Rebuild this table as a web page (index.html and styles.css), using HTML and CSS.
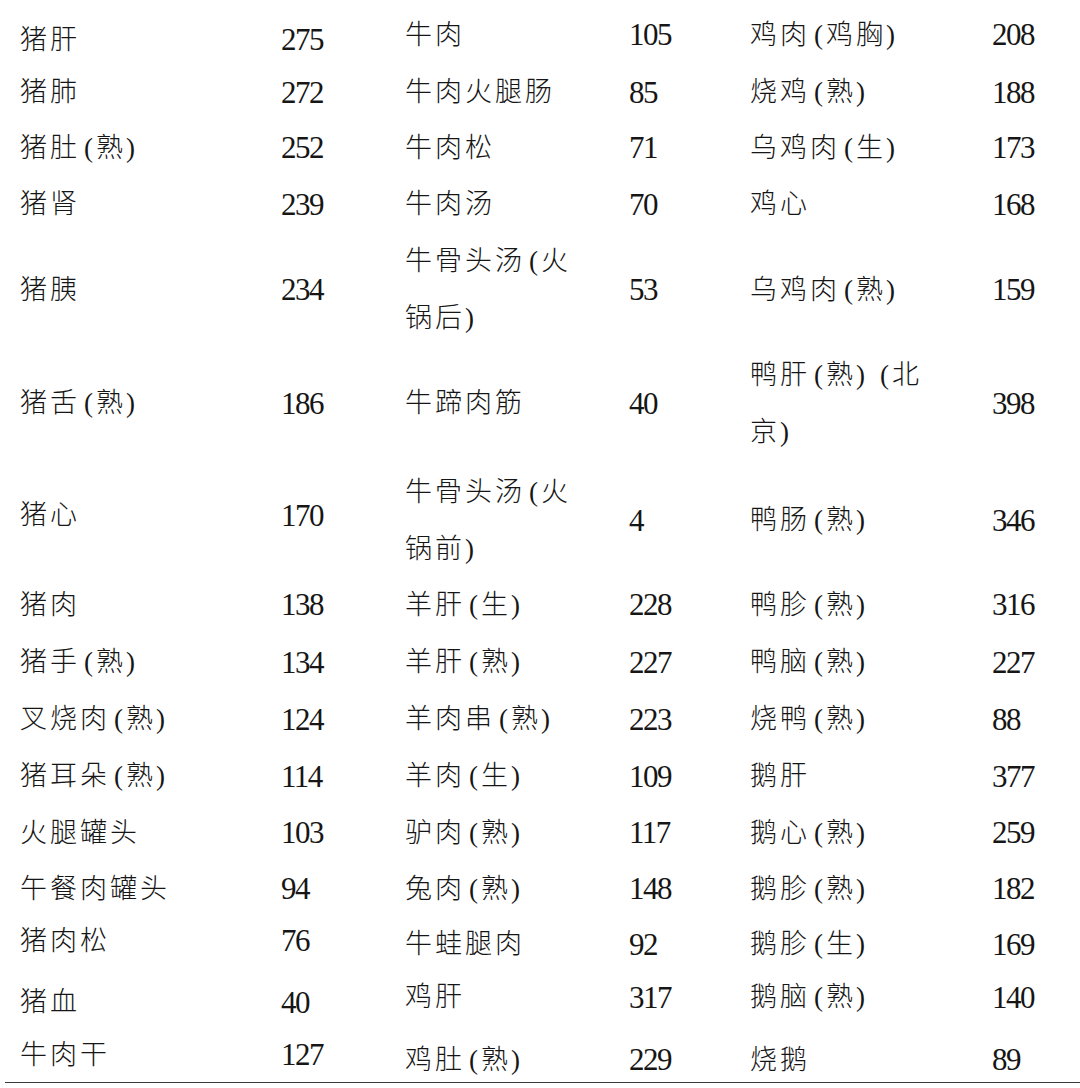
FILE: index.html
```html
<!DOCTYPE html>
<html lang="zh-CN">
<head>
<meta charset="utf-8">
<title>食物嘌呤含量</title>
<link rel="stylesheet" href="styles.css">
</head>
<body>
<div class="sheet">
  <div class="c nm dn"><span>猪肝</span></div><div class="c num dn">275</div><div class="c nm up"><span>牛肉</span></div><div class="c num up">105</div><div class="c nm up"><span>鸡肉<span class="lp">(</span>鸡胸)</span></div><div class="c num up">208</div>
  <div class="c nm"><span>猪肺</span></div><div class="c num">272</div><div class="c nm"><span>牛肉火腿肠</span></div><div class="c num">85</div><div class="c nm"><span>烧鸡<span class="lp">(</span>熟)</span></div><div class="c num">188</div>
  <div class="c nm"><span>猪肚<span class="lp">(</span>熟)</span></div><div class="c num">252</div><div class="c nm"><span>牛肉松</span></div><div class="c num">71</div><div class="c nm"><span>乌鸡肉<span class="lp">(</span>生)</span></div><div class="c num">173</div>
  <div class="c nm"><span>猪肾</span></div><div class="c num">239</div><div class="c nm"><span>牛肉汤</span></div><div class="c num">70</div><div class="c nm"><span>鸡心</span></div><div class="c num">168</div>
  <div class="c nm"><span>猪胰</span></div><div class="c num">234</div><div class="c nm"><span>牛骨头汤<span class="lp">(</span>火<br>锅后)</span></div><div class="c num">53</div><div class="c nm"><span>乌鸡肉<span class="lp">(</span>熟)</span></div><div class="c num">159</div>
  <div class="c nm"><span>猪舌<span class="lp">(</span>熟)</span></div><div class="c num">186</div><div class="c nm"><span>牛蹄肉筋</span></div><div class="c num">40</div><div class="c nm"><span>鸭肝<span class="lp">(</span>熟)<span class="lp2">(</span>北<br>京)</span></div><div class="c num">398</div>
  <div class="c nm up"><span>猪心</span></div><div class="c num up">170</div><div class="c nm dn"><span>牛骨头汤<span class="lp">(</span>火<br>锅前)</span></div><div class="c num dn">4</div><div class="c nm dn"><span>鸭肠<span class="lp">(</span>熟)</span></div><div class="c num dn">346</div>
  <div class="c nm"><span>猪肉</span></div><div class="c num">138</div><div class="c nm"><span>羊肝<span class="lp">(</span>生)</span></div><div class="c num">228</div><div class="c nm"><span>鸭胗<span class="lp">(</span>熟)</span></div><div class="c num">316</div>
  <div class="c nm"><span>猪手<span class="lp">(</span>熟)</span></div><div class="c num">134</div><div class="c nm"><span>羊肝<span class="lp">(</span>熟)</span></div><div class="c num">227</div><div class="c nm"><span>鸭脑<span class="lp">(</span>熟)</span></div><div class="c num">227</div>
  <div class="c nm"><span>叉烧肉<span class="lp">(</span>熟)</span></div><div class="c num">124</div><div class="c nm"><span>羊肉串<span class="lp">(</span>熟)</span></div><div class="c num">223</div><div class="c nm"><span>烧鸭<span class="lp">(</span>熟)</span></div><div class="c num">88</div>
  <div class="c nm"><span>猪耳朵<span class="lp">(</span>熟)</span></div><div class="c num">114</div><div class="c nm"><span>羊肉<span class="lp">(</span>生)</span></div><div class="c num">109</div><div class="c nm"><span>鹅肝</span></div><div class="c num">377</div>
  <div class="c nm"><span>火腿罐头</span></div><div class="c num">103</div><div class="c nm"><span>驴肉<span class="lp">(</span>熟)</span></div><div class="c num">117</div><div class="c nm"><span>鹅心<span class="lp">(</span>熟)</span></div><div class="c num">259</div>
  <div class="c nm"><span>午餐肉罐头</span></div><div class="c num">94</div><div class="c nm"><span>兔肉<span class="lp">(</span>熟)</span></div><div class="c num">148</div><div class="c nm"><span>鹅胗<span class="lp">(</span>熟)</span></div><div class="c num">182</div>
  <div class="c nm up2"><span>猪肉松</span></div><div class="c num up2">76</div><div class="c nm"><span>牛蛙腿肉</span></div><div class="c num">92</div><div class="c nm"><span>鹅胗<span class="lp">(</span>生)</span></div><div class="c num">169</div>
  <div class="c nm dn"><span>猪血</span></div><div class="c num dn">40</div><div class="c nm up"><span>鸡肝</span></div><div class="c num up">317</div><div class="c nm up"><span>鹅脑<span class="lp">(</span>熟)</span></div><div class="c num up">140</div>
  <div class="c nm"><span>牛肉干</span></div><div class="c num">127</div><div class="c nm dn2"><span>鸡肚<span class="lp">(</span>熟)</span></div><div class="c num dn2">229</div><div class="c nm dn2"><span>烧鹅</span></div><div class="c num dn2">89</div>
</div>
</body>
</html>
```
FILE: styles.css
```css
html, body {
  margin: 0;
  padding: 0;
  background: #ffffff;
}

body {
  width: 1080px;
  height: 1088px;
  overflow: hidden;
  color: #161616;
}

.sheet {
  margin-left: 5px;
  width: 1075px;
  padding-top: 10px;
  display: grid;
  grid-template-columns: 261px 124px 224px 121px 242px 103px;
  grid-template-rows: 55px 55px 56px 57px 114px 113px 116px 58px 57px 57px 57px 56px 56px 55px 56px 54px;
  border-bottom: 1px solid #3a3a3a;
}

.c {
  padding-left: 15px;
  box-sizing: border-box;
  white-space: nowrap;
  display: flex;
  align-items: center;
}

.nm {
  font-family: "Liberation Serif", "Noto Sans CJK SC", serif;
  font-size: 27px;
  font-weight: 300;
  letter-spacing: 3px;
  line-height: 57px;
}

.lp {
  margin-left: 4px;
}

.lp2 {
  margin-left: 12px;
}

.num {
  font-family: "Liberation Serif", serif;
  font-size: 31px;
  letter-spacing: -1.5px;
  line-height: 40px;
}

.dn { padding-top: 5px; }
.dn2 { padding-top: 10px; }
.up { padding-bottom: 5px; }
.up2 { padding-bottom: 7px; }
```
